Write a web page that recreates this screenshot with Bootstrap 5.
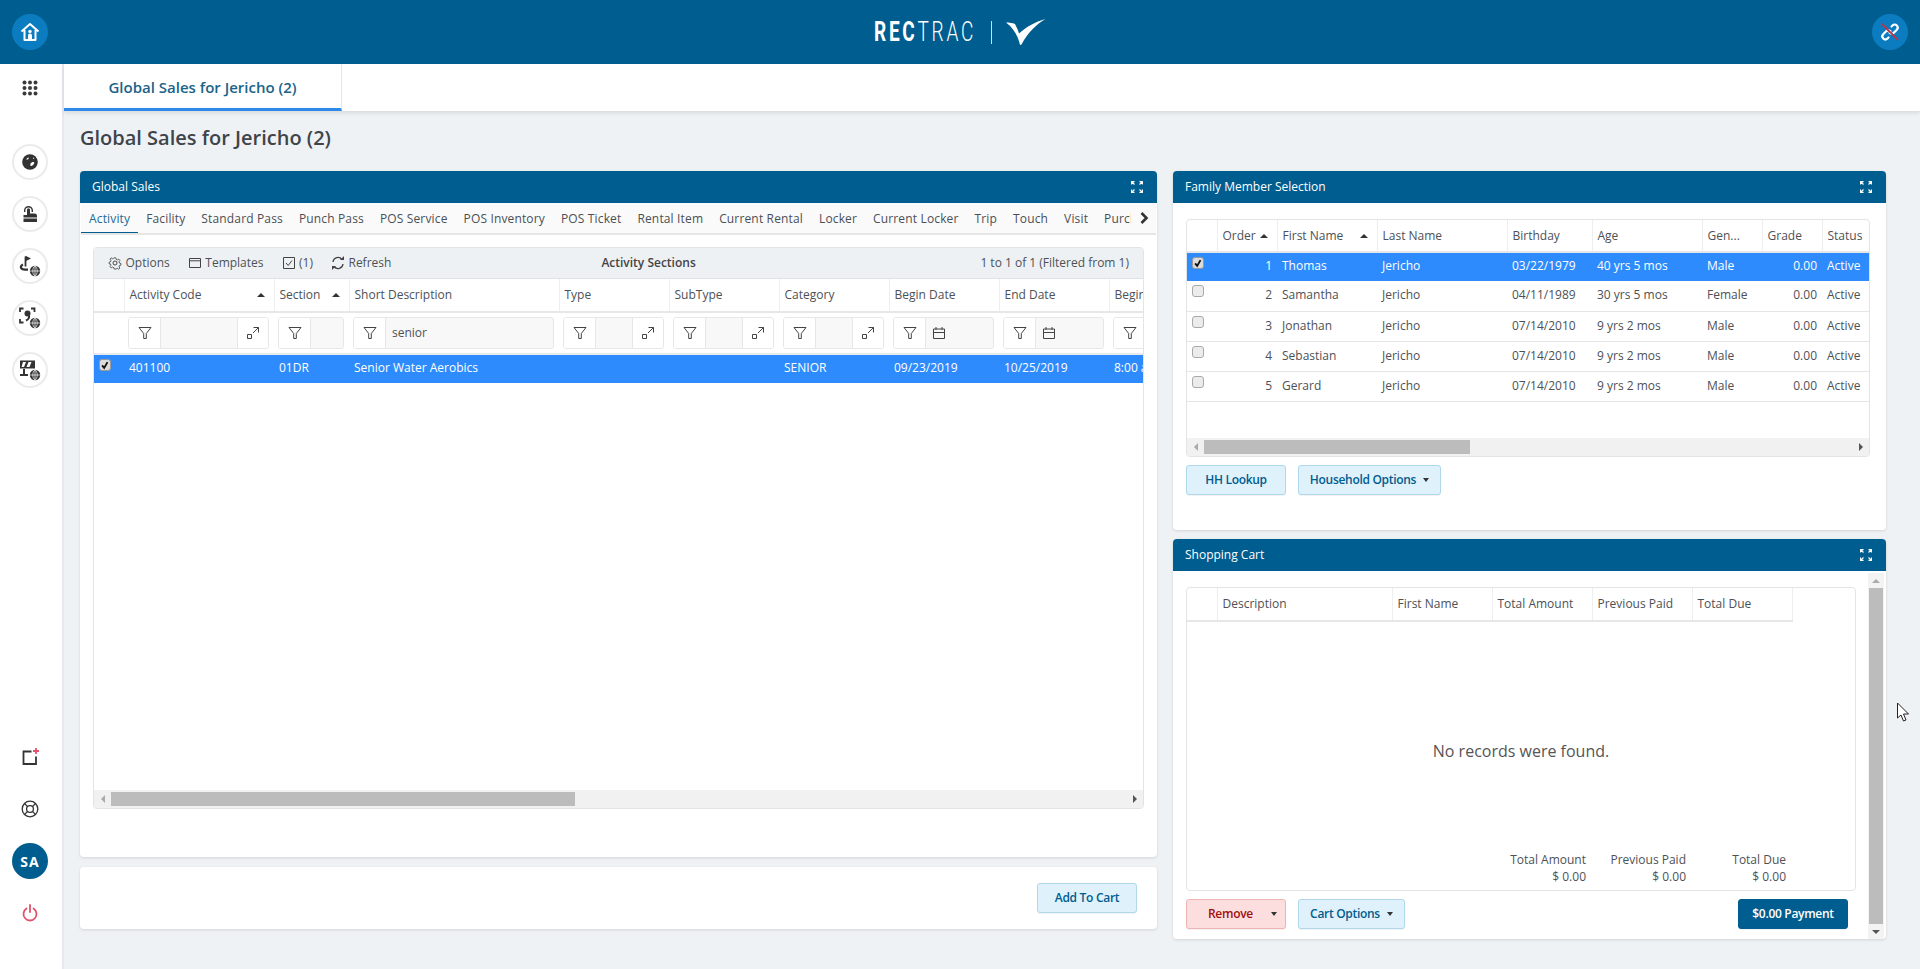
<!DOCTYPE html>
<html lang="en">
<head>
<meta charset="utf-8">
<title>Global Sales for Jericho (2)</title>
<link href="https://cdn.jsdelivr.net/npm/bootstrap@5.3.0/dist/css/bootstrap.min.css" rel="stylesheet">
<style>
html,body{height:100%;overflow:hidden}
body{font-family:"Open Sans",sans-serif;font-size:12px;color:#4d5156;background:#eef2f5}
.topbar{height:64px;background:#005d8f;padding:0 12px;flex-wrap:nowrap}
.round-top{width:36px;height:36px;border-radius:50%;background:#0b7cbf;display:flex;align-items:center;justify-content:center}
.brand-mark{color:#fff;gap:14px;line-height:1}
.brand-word{font-family:Roboto,sans-serif;font-size:28px;letter-spacing:4px;font-weight:300;display:inline-block;width:103px;white-space:nowrap;transform:scaleX(.68);transform-origin:left center}
.brand-word b{font-weight:700}
.brand-sep{width:1px;height:23px;background:#cfe0ea}
.shell{height:905px}
.side{width:64px;background:#fff;border-right:2px solid #e6eaee;padding:6px 2px 38px 0;flex:none}
.side-item{width:36px;height:36px;display:flex;align-items:center;justify-content:center}
.side-circle{border-radius:50%;border:2px solid #ebebeb;background:#fff}
.side-stack{gap:16px}
.side-top{margin-top:38px}
.avatar{width:36px;height:36px;border-radius:50%;background:#005d8f;color:#fff;font-weight:700;font-size:14px;letter-spacing:1px;display:flex;align-items:center;justify-content:center}
.tabstrip{height:47px;background:#fff;box-shadow:0 2px 4px rgba(0,0,0,.1);flex:none}
.maintab{width:278px;height:47px;border-bottom:3px solid #2d8ae8;border-right:1px solid #e6e6e6;color:#1a6488;font-weight:600;font-size:15px;display:flex;align-items:center;justify-content:center;padding-top:2px}
.page-title{font-size:20px;font-weight:600;color:#3f444a;margin:0;padding:13px 0 0 16px;height:60px;line-height:28px}
.cols{padding-left:16px;gap:16px}
.lcol{width:1077px;gap:10px}
.rcol{width:713px;gap:9px}
.pane{border:0;border-radius:4px;box-shadow:0 1px 3px rgba(0,0,0,.12);background:#fff;--bs-card-border-width:0}
.pane-h{height:32px;background:#005d8f;color:#fff;padding:0 14px 0 12px;border:0;border-radius:4px 4px 0 0!important;display:flex;align-items:center;justify-content:space-between;font-size:12px}
.p-sales{height:686px}
.p-add{height:62px;padding:16px 20px}
.p-family{height:359px}
.p-cart{height:400px}
.subtabs{height:32px;background:#fafafa;border-bottom:2px solid #e6e6e6;margin:0 1px;overflow:hidden;flex-wrap:nowrap;align-items:stretch;position:relative}
.subtab{color:#4a4f55;padding:0 8px;line-height:31px;white-space:nowrap;margin-bottom:-2px;font-size:12px;letter-spacing:.15px;height:32px}
.subtab-on{color:#1c6b96;border-bottom:3px solid #005d8f}
.subnext{position:absolute;right:0;top:0;width:25px;height:30px;background:#fafafa;display:flex;align-items:center;justify-content:flex-start;padding-left:9px}
.gridwrap{margin:12px 13px 0 13px;border:1px solid #e2e4e6;border-radius:4px;overflow:hidden;height:562px}
.gbar{height:31px;background:#eef1f4;border-bottom:1px solid #dfe2e5;padding:0 14px;color:#4d5156}
.gbar-item{gap:3.5px;margin-right:18px}
.gbar-title{font-weight:600;color:#444;margin-left:192px}
.gscroll{overflow:hidden;min-height:0}
.gtbl{table-layout:fixed;margin:0;font-size:12px;--bs-table-color:#4d5156;--bs-table-border-color:#e3e5e7;color:#4d5156}
.w-sales{width:1130px}
.w-fam{width:700px}
.w-cart{width:605px}
.gtbl th{font-weight:400;height:33px;padding:0 5px 0 5px;border-bottom:2px solid #e5e7e9;border-right:1px solid #eceef0;vertical-align:middle;white-space:nowrap;overflow:hidden;text-overflow:clip}
.w-fam th{height:32px}
.gtbl td{height:30px;padding:0 5px 1px 5px;vertical-align:middle;white-space:nowrap;overflow:hidden;border-bottom:1px solid #e3e5e7}
.gtbl td.boxcell{padding:0 0 0 5px;vertical-align:top}
.gtbl tr.sel td{background:#2e8bfd;color:#fff;--bs-table-bg:#2e8bfd;--bs-table-color:#fff;border-bottom:0;height:29px;box-shadow:none;padding-bottom:3px}
.gtbl tr.sel td.boxcell{padding:0 0 0 5px}
.gtbl .frow td{height:42px;padding:0 5px 0 4px;border-bottom:2px solid #e8eaec}
.thflex{display:flex;align-items:center;justify-content:space-between}
.sortup{width:0;height:0;border-left:4px solid transparent;border-right:4px solid transparent;border-bottom:4px solid #333;margin-right:4px;flex:none}
.gcheck{width:12px;height:12px;margin:4px 0 0;border-radius:2px;border:1px solid #a9a9a9;background-color:#ececec;display:block;--bs-form-check-bg:#ececec}
.gcheck:checked{background-color:#dcdcdc;border-color:#999;background-image:url("data:image/svg+xml,%3csvg xmlns='http://www.w3.org/2000/svg' viewBox='0 0 12 12'%3e%3cpath fill='none' stroke='%23111' stroke-width='2.2' d='M2.5 6.5l2.5 3 4-7'/%3e%3c/svg%3e")}
.fbox{display:flex;height:32px;border:1px solid #e7e7e7;border-radius:3px;background:#f8f8f8;overflow:hidden;width:100%}
.fbtn{width:32px;flex:none;background:#fff;display:flex;align-items:center;justify-content:center;border-right:1px solid #e7e7e7}
.fpop{border-right:0;border-left:1px solid #e7e7e7;width:31px}
.finput{flex:1 1 0;min-width:0;border:0;background:transparent;padding:0 6px;font-size:12px;color:#4d5156;border-radius:0;box-shadow:none;height:30px;font-family:inherit;line-height:30px}
.fcal{padding:0 0 0 6px;display:flex;align-items:center}
.hbar{height:18px;background:#f1f1f1;flex:none;align-items:center;padding-right:0}
.harrow{width:17px;height:18px;display:flex;align-items:center;justify-content:center;flex:none}
.hthumb{height:14px;background:#bcbcbc}
.tri-l{border-top:4px solid transparent;border-bottom:4px solid transparent;border-right:4px solid #aaa}
.tri-r{border-top:4px solid transparent;border-bottom:4px solid transparent;border-left:4px solid #555}
.tri-u{border-left:4px solid transparent;border-right:4px solid transparent;border-bottom:4px solid #aaa}
.tri-d{border-left:4px solid transparent;border-right:4px solid transparent;border-top:4px solid #555}
.fam-grid{margin:16px 16px 0 13px;border:1px solid #e2e4e6;border-radius:4px;overflow:hidden;height:238px}
.fam-acts{margin:8px 0 0 13px;gap:12px}
.gbtn{height:30px;font-size:12px;font-weight:600;letter-spacing:-.3px;padding:0 4px;border-radius:3px;display:inline-flex;align-items:center;justify-content:center;box-shadow:0 1px 1px rgba(0,0,0,.06);white-space:nowrap}
.gbtn.dropdown-toggle::after{border-top-color:#333;margin-left:7px;border-top-width:4px;border-left-width:3.5px;border-right-width:3.5px;border-bottom:0}
.g-light{background:#dff1fb;border:1px solid #b0d8ec;color:#005d8f}
.g-red{background:#fddede;border:1px solid #eeb4b4;color:#a00f0f}
.g-dark{background:#005d8f;border:1px solid #005d8f;color:#fff}
.wd-100{width:100px}
.wd-107{width:107px}
.wd-143{width:143px}
.wd-110{width:110px}
.g-red.red-btn{justify-content:space-between;padding:0 8px 0 21px}
.cart-body{height:368px}
.cart-main{padding:16px 0 0 13px;min-width:0;width:683px}
.cart-grid{border:1px solid #e2e4e6;border-radius:4px;height:304px;overflow:hidden;width:670px}
.no-rec{font-size:16px;color:#555;padding-top:34px;padding-bottom:6px}
.totals{padding:0 65px 5px 0;line-height:17px}
.tot-col{width:100px;text-align:right;padding-right:4px}
.cart-acts{margin-top:8px;gap:12px;width:670px}
.pay-btn{margin-left:auto;margin-right:8px}
.vbar{width:16px;margin-top:2px;margin-right:2px;background:#f3f3f3;flex:none}
.varrow{height:15px;display:flex;align-items:center;justify-content:center;flex:none}
.vthumb{background:#bcbcbc;flex:1;margin:0 1px}
.cursor-mark{position:absolute;left:1896px;top:702px}
</style>
</head>
<body>
<svg width="0" height="0" class="d-block position-absolute">
<defs>
<symbol id="i-expand" viewBox="0 0 12 12"><path fill="none" stroke="#fff" stroke-width="1.1" d="M.6 3.500V.6h3M8.500.6h2.900v2.900M11.400 8.500v2.900H8.500M3.500 11.400H.6V8.500M1 1l2.500 2.500M11 1L8.500 3.500M11 11L8.500 8.500M1 11l2.500-2.500"/></symbol>
<symbol id="i-funnel" viewBox="0 0 14 14"><path fill="none" stroke="#444" stroke-width="1" d="M1 1.500h12L8.300 7.500v5H5.700v-5z"/></symbol>
<symbol id="i-pop" viewBox="0 0 14 14"><path fill="none" stroke="#444" stroke-width="1" d="M1.500 8.500h4v4h-4zM7.500 1.500h5v5M12.500 1.500L7 7"/></symbol>
<symbol id="i-cal" viewBox="0 0 14 14"><path fill="none" stroke="#444" stroke-width="1" d="M1.500 3h11v9.500h-11zM1.500 6.500h11M4 1v3M10 1v3"/></symbol>
<symbol id="i-globe" viewBox="0 0 12 12"><circle cx="6" cy="6" r="5.800" fill="#fff"/><circle cx="6" cy="6" r="5.200" fill="#333"/><path fill="none" stroke="#fff" stroke-width=".7" d="M.8 6h10.400M6 .8v10.400M6 .8C3 3.500 3 8.500 6 11.200M6 .8c3 2.700 3 7.700 0 10.400"/></symbol>
</defs>
</svg>

<nav class="navbar topbar d-flex justify-content-between">
  <div class="round-top">
    <svg width="20" height="20" viewBox="0 0 20 20"><path fill="none" stroke="#fff" stroke-width="2" stroke-linejoin="round" d="M1.500 9.500L10 2l8.500 7.500M4.500 8v10h11V8"/><circle cx="10" cy="9.500" r="1.700" fill="#fff"/><path fill="#fff" d="M8 18v-4.500a2 2 0 0 1 4 0V18z"/></svg>
  </div>
  <div class="brand-mark d-flex align-items-center">
    <span class="brand-word"><b>REC</b>TRAC</span>
    <span class="brand-sep"></span>
    <svg width="40" height="26" viewBox="0 0 40 26"><path fill="#fff" d="M0 3.500c3.500 0 6.500 .5 9 1.500 1.500 3 3 6 4 9.500C20 8 29 3 39.500 0 31 5 22 13 15.500 25.500l-1.500.5C12 17 7.500 9 0 3.500z"/></svg>
  </div>
  <div class="round-top">
    <svg width="22" height="22" viewBox="0 0 22 22"><g fill="none" stroke="#fff" stroke-width="2.200" stroke-linecap="round"><path d="M12.500 5.500l1-1a3 3 0 0 1 4.300 4.200l-3 3a3 3 0 0 1-4.300 0"/><path d="M9.500 16.500l-1 1a3 3 0 0 1-4.300-4.200l3-3a3 3 0 0 1 4.300 0"/></g><path stroke="#b8354e" stroke-width="1.800" d="M3 3l16 16"/></svg>
  </div>
</nav>

<div class="shell d-flex">
  <aside class="side d-flex flex-column align-items-center">
    <div class="side-item">
      <svg width="16" height="16" viewBox="0 0 16 16" fill="#3a3a3a"><circle cx="2.500" cy="2.500" r="2"/><circle cx="8" cy="2.500" r="2"/><circle cx="13.500" cy="2.500" r="2"/><circle cx="2.500" cy="8" r="2"/><circle cx="8" cy="8" r="2"/><circle cx="13.500" cy="8" r="2"/><circle cx="2.500" cy="13.500" r="2"/><circle cx="8" cy="13.500" r="2"/><circle cx="13.500" cy="13.500" r="2"/></svg>
    </div>
    <div class="side-top side-stack d-flex flex-column">
      <div class="side-item side-circle">
        <svg width="16" height="16" viewBox="0 0 16 16"><circle cx="8" cy="8" r="7.800" fill="#333"/><path fill="#fff" d="M8.500 9.500c1-1.500 2.500-2 3.500-1.300.8.700-.3 2.300-1.500 3.300-1 .8-2 .5-2.300-.3zM4 5.500l2-2 1 .3-1 1.700zM11 3.300l1.500 1.300-1.200.5z"/></svg>
      </div>
      <div class="side-item side-circle">
        <svg width="16" height="18" viewBox="0 0 16 18"><path fill="none" stroke="#333" stroke-width="1.400" d="M2.700 7V5.500a3.800 3.800 0 0 1 7.600 0V7"/><path fill="#333" d="M5 4.800a1.500 1.500 0 0 1 3 0V8.500h4.500a2.500 2.500 0 0 1 2.500 2.500v1.500H1.500v-2.500H5zM1.500 13.500h13.500v3.500H1.500z"/></svg>
      </div>
      <div class="side-item side-circle">
        <svg width="22" height="22" viewBox="0 0 22 22"><path fill="none" stroke="#333" stroke-width="1.800" d="M6.500 11.500V1.500"/><path fill="#333" d="M6.500 .8l5.500 2.700-5.500 2.700z"/><path fill="none" stroke="#333" stroke-width="2.200" d="M4 9.500c-3.500 1.500-2.500 5 2 5.200h3"/><use href="#i-globe" x="10" y="10" width="12" height="12"/></svg>
      </div>
      <div class="side-item side-circle">
        <svg width="22" height="22" viewBox="0 0 22 22"><path fill="none" stroke="#333" stroke-width="1.800" d="M1 5V1.500h3.500M12 1.500h3.500V5M1 12v3.500h3.500"/><circle cx="8.500" cy="6.500" r="3" fill="#333"/><path fill="none" stroke="#333" stroke-width="2" d="M10 8c.5 2.500-.5 4.500-3 5.500"/><use href="#i-globe" x="10" y="10" width="12" height="12"/></svg>
      </div>
      <div class="side-item side-circle">
        <svg width="22" height="22" viewBox="0 0 22 22"><path fill="#333" d="M1 1.500h15v8H1z"/><path fill="#fff" d="M4 3h3L5 8H2.500zM9.500 3h3l-2 5H7.500z"/><path stroke="#333" stroke-width="2" d="M5 10v5M1 16h8"/><use href="#i-globe" x="10" y="10" width="12" height="12"/></svg>
      </div>
    </div>
    <div class="side-stack d-flex flex-column mt-auto">
      <div class="side-item">
        <svg width="18" height="18" viewBox="0 0 18 18"><path fill="none" stroke="#333" stroke-width="1.800" d="M10.500 3.500H2.500v12.500h12.500V8.500"/><path stroke="#e0526d" stroke-width="1.800" d="M15 0v6M12 3h6"/></svg>
      </div>
      <div class="side-item">
        <svg width="18" height="18" viewBox="0 0 18 18"><g fill="none" stroke="#333" stroke-width="1.300"><circle cx="9" cy="9" r="7.800"/><circle cx="9" cy="9" r="3.400"/><path d="M3.500 3.500l3.100 3.100M14.500 3.500l-3.100 3.100M3.500 14.500l3.100-3.100M14.500 14.500l-3.100-3.100"/></g></svg>
      </div>
      <div class="avatar">SA</div>
      <div class="side-item">
        <svg width="16" height="18" viewBox="0 0 16 18"><path fill="none" stroke="#e0526d" stroke-width="1.800" stroke-linecap="round" d="M4.500 4.500a6.500 6.500 0 1 0 7 0M8 1v7"/></svg>
      </div>
    </div>
  </aside>

  <main class="flex-grow-1 d-flex flex-column">
    <div class="tabstrip"><div class="maintab">Global Sales for Jericho (2)</div></div>
    <h1 class="page-title">Global Sales for Jericho (2)</h1>
    <div class="cols d-flex">
      <div class="lcol d-flex flex-column">
        <section class="card pane p-sales">
          <div class="card-header pane-h"><span>Global Sales</span><svg width="12" height="12"><use href="#i-expand"/></svg></div>
          <div class="subtabs d-flex">
            <span class="subtab subtab-on">Activity</span>
            <span class="subtab">Facility</span>
            <span class="subtab">Standard Pass</span>
            <span class="subtab">Punch Pass</span>
            <span class="subtab">POS Service</span>
            <span class="subtab">POS Inventory</span>
            <span class="subtab">POS Ticket</span>
            <span class="subtab">Rental Item</span>
            <span class="subtab">Current Rental</span>
            <span class="subtab">Locker</span>
            <span class="subtab">Current Locker</span>
            <span class="subtab">Trip</span>
            <span class="subtab">Touch</span>
            <span class="subtab">Visit</span>
            <span class="subtab">Purchase</span>
            <span class="subnext"><svg width="9" height="12" viewBox="0 0 9 12"><path fill="none" stroke="#333" stroke-width="2.600" d="M1.500 1l5 5-5 5"/></svg></span>
          </div>
          <div class="gridwrap d-flex flex-column">
            <div class="gbar d-flex align-items-center flex-none">
              <span class="gbar-item d-flex align-items-center"><svg width="14" height="14" viewBox="0 0 14 14"><circle cx="7" cy="7" r="2" fill="none" stroke="#444"/><path fill="none" stroke="#444" d="M6 1h2l.4 1.700 1.500.7 1.500-.9 1.300 1.500-1 1.400.4 1.600 1.700.5v2l-1.700.4-.4 1.500 1 1.400-1.500 1.400-1.500-1-1.500.7L8 14H6l-.4-1.600-1.500-.7-1.500 1L1.200 11.200l1-1.400-.4-1.500L.2 8V6l1.600-.5.400-1.600-1-1.400L2.600 1l1.500 1 1.500-.7z" transform="translate(1 1) scale(.86)"/></svg><span>Options</span></span>
              <span class="gbar-item d-flex align-items-center"><svg width="14" height="14" viewBox="0 0 14 14"><path fill="none" stroke="#444" d="M1.500 2.500h11v9h-11zM1.500 4.800h11"/></svg><span>Templates</span></span>
              <span class="gbar-item d-flex align-items-center"><svg width="14" height="14" viewBox="0 0 14 14"><path fill="none" stroke="#444" d="M1.500 1.500h11v11h-11zM4 7l2.200 2.500L10 4.500"/></svg><span>(1)</span></span>
              <span class="gbar-item d-flex align-items-center"><svg width="14" height="14" viewBox="0 0 14 14"><path fill="none" stroke="#444" stroke-width="1.300" d="M2 6a5 5 0 0 1 9-2.500M12 8a5 5 0 0 1-9 2.500"/><path fill="#444" d="M9 4h4V0zM5 10H1v4z"/></svg><span>Refresh</span></span>
              <span class="gbar-title">Activity Sections</span>
              <span class="ms-auto">1 to 1 of 1 (Filtered from 1)</span>
            </div>
            <div class="gscroll flex-grow-1">
              <table class="table gtbl w-sales">
                <colgroup><col width="30"><col width="150"><col width="75"><col width="210"><col width="110"><col width="110"><col width="110"><col width="110"><col width="110"><col width="115"></colgroup>
                <thead><tr>
                  <th></th>
                  <th><div class="thflex">Activity Code<span class="sortup"></span></div></th>
                  <th><div class="thflex">Section<span class="sortup"></span></div></th>
                  <th>Short Description</th><th>Type</th><th>SubType</th><th>Category</th><th>Begin Date</th><th>End Date</th><th>Begin Time</th>
                </tr></thead>
                <tbody>
                  <tr class="frow">
                    <td></td>
                    <td><div class="fbox"><span class="fbtn"><svg width="14" height="14"><use href="#i-funnel"/></svg></span><span class="finput"></span><span class="fbtn fpop"><svg width="14" height="14"><use href="#i-pop"/></svg></span></div></td>
                    <td><div class="fbox"><span class="fbtn"><svg width="14" height="14"><use href="#i-funnel"/></svg></span><span class="finput"></span></div></td>
                    <td><div class="fbox"><span class="fbtn"><svg width="14" height="14"><use href="#i-funnel"/></svg></span><span class="finput">senior</span></div></td>
                    <td><div class="fbox"><span class="fbtn"><svg width="14" height="14"><use href="#i-funnel"/></svg></span><span class="finput"></span><span class="fbtn fpop"><svg width="14" height="14"><use href="#i-pop"/></svg></span></div></td>
                    <td><div class="fbox"><span class="fbtn"><svg width="14" height="14"><use href="#i-funnel"/></svg></span><span class="finput"></span><span class="fbtn fpop"><svg width="14" height="14"><use href="#i-pop"/></svg></span></div></td>
                    <td><div class="fbox"><span class="fbtn"><svg width="14" height="14"><use href="#i-funnel"/></svg></span><span class="finput"></span><span class="fbtn fpop"><svg width="14" height="14"><use href="#i-pop"/></svg></span></div></td>
                    <td><div class="fbox"><span class="fbtn"><svg width="14" height="14"><use href="#i-funnel"/></svg></span><span class="finput fcal"><svg width="14" height="14"><use href="#i-cal"/></svg></span></div></td>
                    <td><div class="fbox"><span class="fbtn"><svg width="14" height="14"><use href="#i-funnel"/></svg></span><span class="finput fcal"><svg width="14" height="14"><use href="#i-cal"/></svg></span></div></td>
                    <td><div class="fbox"><span class="fbtn"><svg width="14" height="14"><use href="#i-funnel"/></svg></span><span class="finput"></span></div></td>
                  </tr>
                  <tr class="sel">
                    <td class="boxcell"><input class="form-check-input gcheck" type="checkbox" checked aria-label="Select row"></td>
                    <td>401100</td><td>01DR</td><td>Senior Water Aerobics</td><td></td><td></td><td>SENIOR</td><td>09/23/2019</td><td>10/25/2019</td><td>8:00 am</td>
                  </tr>
                </tbody>
              </table>
            </div>
            <div class="hbar d-flex">
              <span class="harrow"><span class="tri-l"></span></span>
              <span class="hthumb" style="width:464px"></span>
              <span class="flex-grow-1"></span>
              <span class="harrow"><span class="tri-r"></span></span>
            </div>
          </div>
        </section>
        <section class="card pane p-add d-flex flex-row justify-content-end">
          <button type="button" class="btn gbtn g-light wd-100">Add To Cart</button>
        </section>
      </div>

      <div class="rcol d-flex flex-column">
        <section class="card pane p-family">
          <div class="card-header pane-h"><span>Family Member Selection</span><svg width="12" height="12"><use href="#i-expand"/></svg></div>
          <div class="fam-grid d-flex flex-column">
            <div class="gscroll flex-grow-1">
              <table class="table gtbl w-fam">
                <colgroup><col width="30"><col width="60"><col width="100"><col width="130"><col width="85"><col width="110"><col width="60"><col width="60"><col width="65"></colgroup>
                <thead><tr>
                  <th></th>
                  <th><div class="thflex">Order<span class="sortup"></span></div></th>
                  <th><div class="thflex">First Name<span class="sortup"></span></div></th>
                  <th>Last Name</th><th>Birthday</th><th>Age</th><th>Gen...</th><th>Grade</th><th>Status</th>
                </tr></thead>
                <tbody>
                  <tr class="sel"><td class="boxcell"><input class="form-check-input gcheck" type="checkbox" checked aria-label="Select Thomas"></td><td class="text-end">1</td><td>Thomas</td><td>Jericho</td><td>03/22/1979</td><td>40 yrs 5 mos</td><td>Male</td><td class="text-end">0.00</td><td>Active</td></tr>
                  <tr><td class="boxcell"><input class="form-check-input gcheck" type="checkbox" aria-label="Select Samantha"></td><td class="text-end">2</td><td>Samantha</td><td>Jericho</td><td>04/11/1989</td><td>30 yrs 5 mos</td><td>Female</td><td class="text-end">0.00</td><td>Active</td></tr>
                  <tr><td class="boxcell"><input class="form-check-input gcheck" type="checkbox" aria-label="Select Jonathan"></td><td class="text-end">3</td><td>Jonathan</td><td>Jericho</td><td>07/14/2010</td><td>9 yrs 2 mos</td><td>Male</td><td class="text-end">0.00</td><td>Active</td></tr>
                  <tr><td class="boxcell"><input class="form-check-input gcheck" type="checkbox" aria-label="Select Sebastian"></td><td class="text-end">4</td><td>Sebastian</td><td>Jericho</td><td>07/14/2010</td><td>9 yrs 2 mos</td><td>Male</td><td class="text-end">0.00</td><td>Active</td></tr>
                  <tr><td class="boxcell"><input class="form-check-input gcheck" type="checkbox" aria-label="Select Gerard"></td><td class="text-end">5</td><td>Gerard</td><td>Jericho</td><td>07/14/2010</td><td>9 yrs 2 mos</td><td>Male</td><td class="text-end">0.00</td><td>Active</td></tr>
                </tbody>
              </table>
            </div>
            <div class="hbar d-flex">
              <span class="harrow"><span class="tri-l"></span></span>
              <span class="hthumb" style="width:266px"></span>
              <span class="flex-grow-1"></span>
              <span class="harrow"><span class="tri-r"></span></span>
            </div>
          </div>
          <div class="fam-acts d-flex">
            <button type="button" class="btn gbtn g-light wd-100">HH Lookup</button>
            <button type="button" class="btn gbtn g-light wd-143 dropdown-toggle">Household Options</button>
          </div>
        </section>
        <section class="card pane p-cart">
          <div class="card-header pane-h"><span>Shopping Cart</span><svg width="12" height="12"><use href="#i-expand"/></svg></div>
          <div class="cart-body d-flex">
            <div class="cart-main d-flex flex-column">
              <div class="cart-grid d-flex flex-column">
                <table class="table gtbl w-cart flex-none">
                  <colgroup><col width="30"><col width="175"><col width="100"><col width="100"><col width="100"><col width="100"></colgroup>
                  <thead><tr><th></th><th>Description</th><th>First Name</th><th>Total Amount</th><th>Previous Paid</th><th>Total Due</th></tr></thead>
                </table>
                <div class="no-rec flex-grow-1 d-flex align-items-center justify-content-center">No records were found.</div>
                <div class="totals d-flex justify-content-end">
                  <div class="tot-col">Total Amount<br>$ 0.00</div>
                  <div class="tot-col">Previous Paid<br>$ 0.00</div>
                  <div class="tot-col">Total Due<br>$ 0.00</div>
                </div>
              </div>
              <div class="cart-acts d-flex">
                <button type="button" class="btn gbtn g-red wd-100 red-btn dropdown-toggle">Remove</button>
                <button type="button" class="btn gbtn g-light wd-107 dropdown-toggle">Cart Options</button>
                <button type="button" class="btn gbtn g-dark wd-110 pay-btn">$0.00 Payment</button>
              </div>
            </div>
            <div class="vbar d-flex flex-column ms-auto">
              <span class="varrow"><span class="tri-u"></span></span>
              <span class="vthumb"></span>
              <span class="varrow"><span class="tri-d"></span></span>
            </div>
          </div>
        </section>
      </div>
    </div>
  </main>
</div>
<svg class="cursor-mark" width="14" height="21" viewBox="0 0 14 21"><path fill="#fff" stroke="#222" stroke-width="1" d="M1.500 1v15l3.500-3 2.500 6 2.500-1-2.500-6h5z"/></svg>
</body>
</html>
